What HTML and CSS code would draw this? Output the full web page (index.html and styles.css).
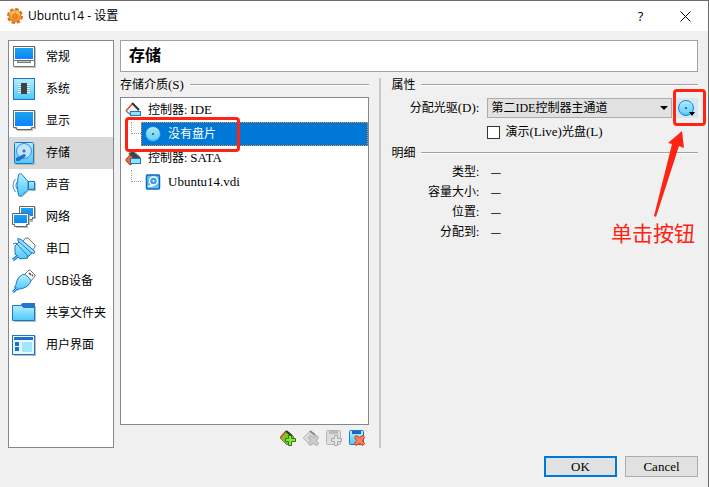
FILE: index.html
```
<!DOCTYPE html>
<html lang="zh-CN">
  <head>
    <meta charset="UTF-8" />
    <meta name="viewport" content="width=device-width, initial-scale=1.0" />
    <title>Ubuntu14 - 设置</title>
    <link rel="stylesheet" href="styles.css">
  </head>
  <body>
    <!-- shared gradients and icons -->
    <svg class="defs" aria-hidden="true">
      <defs>
        <linearGradient id="screen" x1="0" y1="0" x2="0" y2="1">
          <stop offset="0" stop-color="#1ba3ea" />
          <stop offset="1" stop-color="#0a84ff" />
        </linearGradient>
        <linearGradient id="sky" x1="0" y1="0" x2="0" y2="1">
          <stop offset="0" stop-color="#b4effd" />
          <stop offset="1" stop-color="#4cc8f8" />
        </linearGradient>
        <linearGradient id="orange" x1="0" y1="0" x2="0" y2="1">
          <stop offset="0" stop-color="#ffd25a" />
          <stop offset="1" stop-color="#f07a18" />
        </linearGradient>
        <symbol id="disc" viewBox="0 0 16 16">
          <circle cx="8" cy="8" r="7.5" fill="url(#sky)" stroke="#1a7fd6" />
          <circle cx="8" cy="8" r="4" fill="none" stroke="#8fdcfa" />
          <circle cx="8" cy="8" r="1.5" fill="#14508c" stroke="#d8f6ff" stroke-width=".6" />
        </symbol>
        <symbol id="disk" viewBox="0 0 24 24">
          <rect x="3" y="3" width="20" height="21" rx="1" fill="#b5b5b5" />
          <rect x="2.5" y="1.5" width="19" height="21" rx="1" fill="url(#sky)" stroke="#1e76cc" />
          <circle cx="12" cy="10" r="7.5" fill="#bfe6fb" stroke="#3c8edb" />
          <circle cx="12" cy="10" r="2" fill="#2a72c9" stroke="#fff" stroke-width=".6" />
          <path d="M4 20v-3l8-4 2 1-1 2-6 4z" fill="#1e6fd0" />
        </symbol>
        <symbol id="disk-small" viewBox="0 0 16 16">
          <rect x="1.5" y="1" width="13" height="14" rx="1" fill="#58c4f7" stroke="#1466c2" stroke-width="1.5" />
          <circle cx="8.5" cy="7" r="4" fill="#3d9de6" stroke="#fff" stroke-width="1.5" />
          <circle cx="8.5" cy="7" r="1" fill="#fff" />
          <path d="M3 12l5-2 2 1-3 2H3z" fill="#fff" />
        </symbol>
      </defs>
    </svg>

    <div class="window">
      <header class="titlebar">
        <svg class="icon-16" viewBox="0 0 16 16">
          <circle cx="8" cy="8" r="7" fill="none" stroke="#d9711c" stroke-width="2" stroke-dasharray="3.5 2" />
          <circle cx="8" cy="8" r="6" fill="url(#orange)" stroke="#dc7a20" />
          <path d="M8 3v3M8 10v3M3 8h3M10 8h3" stroke="#e89a30" />
          <circle cx="8" cy="8" r="2" fill="#ffc763" stroke="#c5631a" />
          <circle cx="8" cy="8" r=".7" fill="#a64310" />
        </svg>
        <h1 class="title">Ubuntu14 - 设置</h1>
        <button class="title-button" aria-label="帮助">?</button>
        <button class="title-button" aria-label="关闭">
          <svg class="close" viewBox="0 0 11 11"><path d="M.5 .5l10 10M10.5 .5l-10 10" fill="none" stroke="#000" /></svg>
        </button>
      </header>

      <div class="content">
        <nav class="sidebar">
          <a href="#general" class="nav-item">
            <svg class="icon-24" viewBox="0 0 24 24">
              <path d="M2 2h22v21H2z" fill="#c4c4c4" />
              <rect x="1.5" y="1.5" width="21" height="14" fill="#fff" stroke="#666" />
              <rect x="3" y="3" width="18" height="11" fill="url(#screen)" />
              <path d="M1.5 15.500v6h21v-6h-4v2h-13v-2z" fill="#fff" stroke="#777" />
            </svg>
            常规
          </a>
          <a href="#system" class="nav-item">
            <svg class="icon-24" viewBox="0 0 24 24">
              <rect x="1.5" y="1.5" width="21" height="21" fill="url(#sky)" stroke="#1e76cc" />
              <path d="M6 7.500h12M6 9.500h12M6 11.500h12M6 13.500h12M6 15.500h12" stroke="#f2fbff" />
              <path d="M6 8.500h12M6 10.500h12M6 12.500h12M6 14.500h12" stroke="#5a9cb8" stroke-width=".5" />
              <rect x="9" y="6" width="6" height="11" fill="#3c4248" />
            </svg>
            系统
          </a>
          <a href="#display" class="nav-item">
            <svg class="icon-24" viewBox="0 0 24 24">
              <path d="M2 2h22v18h-3v2H5v-2H2z" fill="#c0c0c0" />
              <path d="M1.5 1.500h21v17h-3v2h-15v-2h-3z" fill="#fff" stroke="#666" />
              <rect x="3" y="3" width="18" height="14" fill="url(#screen)" />
            </svg>
            显示
          </a>
          <a href="#storage" class="nav-item active">
            <svg class="icon-24"><use href="#disk" /></svg>
            存储
          </a>
          <a href="#audio" class="nav-item">
            <svg class="icon-24" viewBox="0 0 24 24">
              <path d="M7 23l3 1 7-6h7v-8l-1-1v8h-7z" fill="#bbb" />
              <path d="M6.500 1.500q2-2 3.500 0l6 7v8l-6 6q-2 1.500-3.500 0 -3-10 0-21z" fill="url(#sky)" stroke="#2077cd" />
              <rect x="16.500" y="8.500" width="6" height="8" fill="url(#sky)" stroke="#2077cd" />
              <path d="M3.500 6q-5 6 0 13M5 9q-2.500 3.500 0 7" fill="none" stroke="#3295de" />
            </svg>
            声音
          </a>
          <a href="#network" class="nav-item">
            <svg class="icon-24" viewBox="0 0 24 24">
              <path d="M8 2h16v12h-3v3H8z" fill="#bbb" />
              <path d="M7.500 1.500h15v11h-2v2h-13z" fill="#fff" stroke="#666" />
              <rect x="9" y="3" width="12" height="8" fill="url(#screen)" />
              <path d="M2 10h16v10h-2v3H4v-3H2z" fill="#bbb" />
              <path d="M.5 8.500h16v11h-2v2h-12v-2h-2z" fill="#fff" stroke="#666" />
              <rect x="2" y="10" width="13" height="8" fill="url(#screen)" />
            </svg>
            网络
          </a>
          <a href="#serial" class="nav-item">
            <svg class="icon-24" viewBox="0 0 24 24">
              <path d="M11 4q2-4 5-3l7 7q1 3-3 5z" fill="#f3f3f3" stroke="#777" />
              <path d="M3 9l5-5 13 11-6 6-7 1-5-5z" fill="url(#sky)" stroke="#2077cd" />
              <path d="M6 1.500l3 1 14 12-1 2-3-1L6 4z" fill="#8fe0fc" stroke="#2077cd" />
              <path d="M1 7l3-1 12 13-1 3" fill="none" stroke="#2077cd" />
              <path d="M1 23l5-4" stroke="#2077cd" stroke-width="3" />
              <path d="M1 23l5-4" stroke="#7fdafb" />
            </svg>
            串口
          </a>
          <a href="#usb" class="nav-item">
            <svg class="icon-24" viewBox="0 0 24 24">
              <path d="M12 6l5-5h1l5 5v1l-5 6z" fill="#fff" stroke="#777" />
              <path d="M17 4l2 2M20 6l1 1" stroke="#444" stroke-width="1.5" />
              <path d="M10.500 5.500q2-1 4 1l3 3q2 2 1 4-3 5-8 6-3 0-5 1.500l-3-3q2-2 2-5 1-5 6-7.500z" fill="url(#sky)" stroke="#2077cd" />
              <path d="M1 23l4-4" stroke="#2077cd" stroke-width="3" />
              <path d="M1 23l4-4" stroke="#7fdafb" />
            </svg>
            USB设备
          </a>
          <a href="#shared" class="nav-item">
            <svg class="icon-24" viewBox="0 0 24 24">
              <path d="M2 5h22v16H2z" fill="#bbb" />
              <path d="M9 6V3l2-1h12v5H9z" fill="#2b70cc" />
              <path d="M.5 4.500h9l2 2h11v13H.5z" fill="url(#sky)" stroke="#1e76cc" />
            </svg>
            共享文件夹
          </a>
          <a href="#interface" class="nav-item">
            <svg class="icon-24" viewBox="0 0 24 24">
              <path d="M2 3h22v20H2z" fill="#bbb" />
              <rect x=".5" y="2.500" width="22" height="19" fill="#e6f7fe" stroke="#1e76cc" />
              <path d="M2 4h19v3H2zM3 9h4v4H3zM3 14h4v4H3z" fill="#1e6fc8" />
              <path d="M10 9h10v10H10z" fill="#a6e4fa" />
            </svg>
            用户界面
          </a>
        </nav>

        <main class="main">
          <h2 class="page-title">存储</h2>

          <div class="panes">
            <section class="pane">
              <h3 class="legend"><span>存储介质<span class="en">(S)</span></span></h3>
              <ul class="tree">
                <li>
                  <div class="tree-row">
                    <svg class="icon-16" viewBox="0 0 16 16">
                      <path d="M8 1l6 6-6 7-7-5z" fill="#f5f5f5" stroke="#999" />
                      <path d="M1 9l6-7" stroke="#d9532c" stroke-width="1.5" />
                      <path d="M7 1l7 7" stroke="#333" stroke-width="2" />
                      <path d="M1 9l6 5" stroke="#888" stroke-width="1.5" />
                      <rect x="5.500" y="9.500" width="10" height="4" fill="#8fe5ff" stroke="#1e76cc" />
                    </svg>
                    <span>控制器: <span class="en">IDE</span></span>
                  </div>
                  <ul class="branch">
                    <li class="tree-row selected">
                      <svg class="icon-16"><use href="#disc" /></svg>
                      <span>没有盘片</span>
                    </li>
                  </ul>
                </li>
                <li>
                  <div class="tree-row">
                    <svg class="icon-16" viewBox="0 0 16 16">
                      <path d="M4 3l4-2 7 6v3H5z" fill="#444" stroke="#777" />
                      <path d="M1 9l4-4 5 5-3 4-2 1-4-4z" fill="#ed6837" stroke="#b94420" />
                      <rect x="5.500" y="8.500" width="10" height="5" fill="#8fe5ff" stroke="#1e76cc" />
                    </svg>
                    <span>控制器: <span class="en">SATA</span></span>
                  </div>
                  <ul class="branch">
                    <li class="tree-row">
                      <svg class="icon-16"><use href="#disk-small" /></svg>
                      <span class="en">Ubuntu14.vdi</span>
                    </li>
                  </ul>
                </li>
              </ul>
              <div class="toolbar">
                <button class="tool" aria-label="添加控制器">
                  <svg class="icon-16" viewBox="0 0 16 16">
                    <path d="M7 1l7 6-7 8-7-7z" fill="#79c52b" stroke="#777" />
                    <path d="M0 8l6-7" stroke="#e04b20" stroke-width="1.5" />
                    <path d="M6 1l6 5" stroke="#333" stroke-width="2" />
                    <path d="M8.500 5.500h3v3h4v3h-4v4h-3v-4h-3v-3h3z" fill="#7fee35" stroke="#32780d" />
                  </svg>
                </button>
                <button class="tool" aria-label="删除控制器" disabled>
                  <svg class="icon-16" viewBox="0 0 16 16">
                    <path d="M7 1l7 6-7 8-7-7z" fill="#dadada" stroke="#bbb" />
                    <path d="M7 1l5 4" stroke="#888" stroke-width="2" />
                    <path d="M7 5.500l3.500 2 3.500-2 1.500 2-2 3 2 3-1.500 2-3.500-2-3.500 2-1.500-2 2-3-2-3z" fill="#ccc" stroke="#aaa" />
                  </svg>
                </button>
                <button class="tool" aria-label="添加虚拟介质" disabled>
                  <svg class="icon-16" viewBox="0 0 16 16">
                    <rect x=".5" y=".5" width="14" height="14" rx="1" fill="#ddd" stroke="#b5b5b5" />
                    <path d="M3 1h9v3H3z" fill="#bbb" />
                    <path d="M8.500 5.500h3v3h4v3h-4v4h-3v-4h-3v-3h3z" fill="#e5e5e5" stroke="#aaa" />
                  </svg>
                </button>
                <button class="tool" aria-label="删除虚拟介质">
                  <svg class="icon-16" viewBox="0 0 16 16">
                    <rect x=".5" y=".5" width="14" height="14" rx="1" fill="url(#sky)" stroke="#1e76cc" />
                    <path d="M3 1h9v3H3z" fill="#1e64c0" />
                    <path d="M7 5.500l3.500 2 3.500-2 1.500 2-2 3 2 3-1.500 2-3.500-2-3.500 2-1.500-2 2-3-2-3z" fill="#ff7e55" stroke="#c93c18" />
                  </svg>
                </button>
              </div>
            </section>

            <div class="splitter"></div>

            <section class="pane">
              <h3 class="legend">属性</h3>
              <div class="form attributes">
                <label class="label" for="drive">分配光驱<span class="en">(D):</span></label>
                <div class="select-box">
                  <select class="select" id="drive">
                    <option>第二IDE控制器主通道</option>
                  </select>
                  <svg class="arrow" viewBox="0 0 8 4"><path d="M0 0h8L4 4z" /></svg>
                </div>
                <button class="disc-button" aria-label="选择虚拟光盘">
                  <svg class="icon-disc" viewBox="0 0 18 17">
                    <svg width="16" height="16"><use href="#disc" /></svg>
                    <path d="M11 12h6l-3 4z" />
                  </svg>
                  <span class="mark mark-button"></span>
                  <svg class="pointer" viewBox="0 0 32 86">
                    <path d="M29 0L15 12l4 1L1 85l2 1L26 15l5 2z" fill="#ff2314" />
                  </svg>
                </button>
                <label class="check">
                  <input type="checkbox" class="checkbox">
                  <span>演示<span class="en">(Live)</span>光盘<span class="en">(L)</span></span>
                </label>
              </div>

              <h3 class="legend">明细</h3>
              <dl class="form details">
                <dt class="label">类型:</dt>
                <dd>—</dd>
                <dt class="label">容量大小:</dt>
                <dd>—</dd>
                <dt class="label">位置:</dt>
                <dd>—</dd>
                <dt class="label">分配到:</dt>
                <dd>—</dd>
              </dl>
              <p class="note">单击按钮</p>
            </section>
          </div>
        </main>
      </div>

      <footer class="footer">
        <button class="button primary">OK</button>
        <button class="button">Cancel</button>
      </footer>
    </div>
  </body>
</html>
```

FILE: styles.css
```
*,
*::before,
*::after {
  box-sizing: border-box;
}

body {
  margin: 0;
  font-family: "Liberation Serif", "Noto Sans CJK SC", serif;
  font-size: 12px;
  line-height: 14px;
  color: #000;
}

h1,
h2,
h3,
ul,
dl,
dd,
p {
  margin: 0;
  padding: 0;
  font-weight: normal;
  list-style: none;
}

button,
select,
input {
  margin: 0;
  padding: 0;
  font: inherit;
  color: inherit;
}

svg {
  display: block;
  flex-shrink: 0;
}

.defs {
  position: absolute;
  width: 0;
  height: 0;
}

.en {
  font-size: 13px;
}

.icon-16 {
  width: 16px;
  height: 16px;
}

.icon-24 {
  width: 24px;
  height: 24px;
}

.window {
  display: flex;
  flex-direction: column;
  min-height: 100vh;
  background: #f0f0f0;
  border-top: 1px solid #6b6b6b;
  border-right: 1px solid #6b6b6b;
}

/* title bar */
.titlebar {
  display: flex;
  align-items: center;
  height: 30px;
  padding-left: 7px;
  background: #fff;
  font-family: "Open Sans", "Noto Sans CJK SC", sans-serif;
}

.title {
  flex: 1;
  margin-left: 5px;
  font-size: 12px;
}

.title-button {
  display: flex;
  align-items: center;
  justify-content: center;
  width: 45px;
  height: 30px;
  background: none;
  border: none;
  font-size: 13px;
}

.close {
  width: 11px;
  height: 11px;
}

.content {
  display: flex;
  flex: 1;
  gap: 6px;
  padding: 9px 10px 0 8px;
}

/* categories */
.sidebar {
  width: 106px;
  background: #fff;
  border: 1px solid #828790;
  font-family: "Open Sans", "Noto Sans CJK SC", sans-serif;
  line-height: 16px;
}

.nav-item {
  display: flex;
  align-items: center;
  gap: 10px;
  height: 32px;
  padding-left: 3px;
  color: #000;
  text-decoration: none;
  white-space: nowrap;
}

.nav-item.active {
  background: #d9d9d9;
}

.main {
  display: flex;
  flex: 1;
  flex-direction: column;
  gap: 6px;
}

.page-title {
  padding: 0 8px;
  background: #fff;
  border: 1px solid #a0a0a0;
  font-size: 16px;
  font-weight: bold;
  line-height: 30px;
}

.panes {
  display: grid;
  flex: 1;
  grid-template-columns: 249fr 2px 306fr;
  column-gap: 10px;
}

.pane {
  position: relative;
  display: flex;
  flex-direction: column;
}

.splitter {
  background: #c8c8c8;
}

.legend {
  display: flex;
  align-items: center;
  gap: 6px;
  height: 14px;
  font-size: 12px;
}

.legend::after {
  content: "";
  flex: 1;
  height: 2px;
  background: #a0a0a0;
  border-bottom: 1px solid #fff;
}

/* storage tree */
.tree {
  flex: 1;
  margin-top: 5px;
  background: #fff;
  border: 1px solid #828790;
}

.tree-row {
  display: flex;
  align-items: center;
  gap: 7px;
  height: 24px;
  padding-left: 4px;
}

.branch {
  position: relative;
  padding-left: 20px;
}

.branch::before {
  content: "";
  position: absolute;
  top: 0;
  left: 10px;
  width: 10px;
  height: 12px;
  border-left: 1px dotted #a0a0a0;
  border-bottom: 1px dotted #a0a0a0;
}

.tree-row.selected {
  position: relative;
  z-index: 1;
  background: #0078d7;
  outline: 1px dotted #ff8728;
  outline-offset: -1px;
  color: #fff;
}

.toolbar {
  display: flex;
  justify-content: flex-end;
  gap: 7px;
  padding: 5px 4px 2px;
}

.tool {
  background: none;
  border: none;
}

/* attributes */
.form {
  display: grid;
  align-items: center;
  column-gap: 8px;
}

.attributes {
  grid-template-columns: 88px 1fr 24px;
  row-gap: 7px;
  margin: 6px 0 7px;
}

.label {
  text-align: right;
}

.select-box {
  position: relative;
  margin-right: -6px;
}

.select {
  appearance: none;
  display: block;
  width: 100%;
  height: 20px;
  padding: 0 16px 0 3px;
  background: #e1e1e1;
  border: 1px solid #adadad;
  border-radius: 0;
}

.arrow {
  position: absolute;
  top: 8px;
  right: 4px;
  width: 8px;
  height: 4px;
}

.disc-button {
  position: relative;
  height: 20px;
  background: #d8e6f2;
  border: none;
}

.icon-disc {
  width: 18px;
  height: 17px;
  margin-left: 4px;
}

.check {
  display: flex;
  align-items: center;
  grid-column: 2 / -1;
  gap: 5px;
}

.checkbox {
  appearance: none;
  width: 13px;
  height: 13px;
  background: #fff;
  border: 1px solid #333;
}

.details {
  grid-template-columns: 88px 1fr;
  grid-auto-rows: 20px;
  margin-top: 2px;
}

.details dd {
  padding-left: 3px;
  font-family: "Noto Sans CJK SC", sans-serif;
}

/* red call-outs over the dialog */
.mark,
.selected::after {
  position: absolute;
  border: 3px solid #ff2314;
  border-radius: 4px;
}

.selected::after {
  content: "";
  top: -5px;
  left: -16px;
  width: 115px;
  height: 35px;
}

.mark-button {
  top: -9px;
  right: -8px;
  width: 33px;
  height: 37px;
}

.pointer {
  position: absolute;
  top: 33px;
  right: 13px;
  width: 32px;
  height: 86px;
}

.note {
  position: absolute;
  top: 143px;
  right: 3px;
  color: #ff2314;
  font-size: 21px;
  line-height: 26px;
}

/* dialog buttons */
.footer {
  display: flex;
  justify-content: flex-end;
  gap: 8px;
  padding: 8px 10px 10px;
}

.button {
  width: 73px;
  height: 21px;
  background: #e1e1e1;
  border: 1px solid #adadad;
  font-size: 13px;
}

.button.primary {
  border: 2px solid #0078d7;
}
```
